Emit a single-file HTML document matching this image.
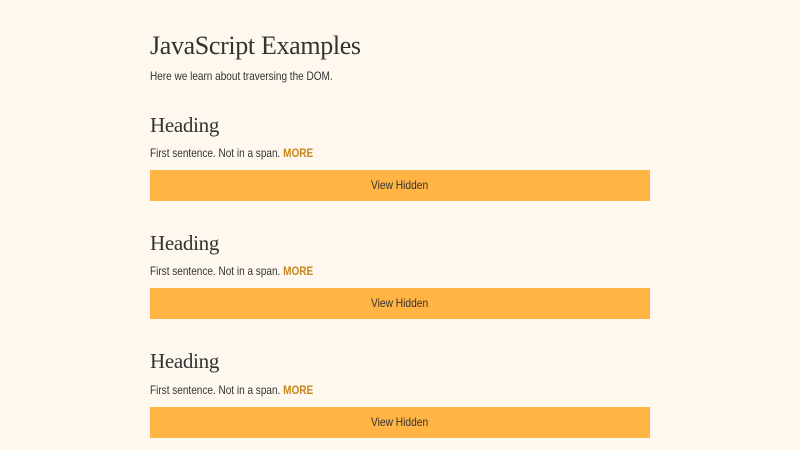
<!DOCTYPE html>
<html><head><style>
body{margin:0;background:#fef8ee;color:#333;font-family:"Liberation Sans",sans-serif;}
h1{position:absolute;left:150px;top:31px;margin:0;font:26px/30px "Liberation Serif",serif;color:#333;font-weight:normal;letter-spacing:-0.35px}
.p{position:absolute;left:150px;font-size:12px;line-height:14px;margin:0;white-space:nowrap;transform:scaleX(0.835);transform-origin:0 0}
h2{position:absolute;left:150px;margin:0;font:21px/24px "Liberation Serif",serif;font-weight:normal;color:#333;letter-spacing:-0.3px}
.b{position:absolute;left:150px;width:500px;height:31px;background:#ffb443;text-align:center;font-size:12px;line-height:31px;color:#333}
.b span{display:inline-block;transform:scaleX(0.85)}
.m{color:#c7861d;font-weight:bold}
</style></head><body>
<h1>JavaScript Examples</h1>
<p class="p" style="top:69px">Here we learn about traversing the DOM.</p>
<h2 style="top:113px">Heading</h2>
<p class="p" style="top:146px">First sentence. Not in a span. <span class="m">MORE</span></p>
<div class="b" style="top:170px"><span>View Hidden</span></div>
<h2 style="top:231px">Heading</h2>
<p class="p" style="top:264px">First sentence. Not in a span. <span class="m">MORE</span></p>
<div class="b" style="top:288px"><span>View Hidden</span></div>
<h2 style="top:349px">Heading</h2>
<p class="p" style="top:383px">First sentence. Not in a span. <span class="m">MORE</span></p>
<div class="b" style="top:407px"><span>View Hidden</span></div>
</body></html>
